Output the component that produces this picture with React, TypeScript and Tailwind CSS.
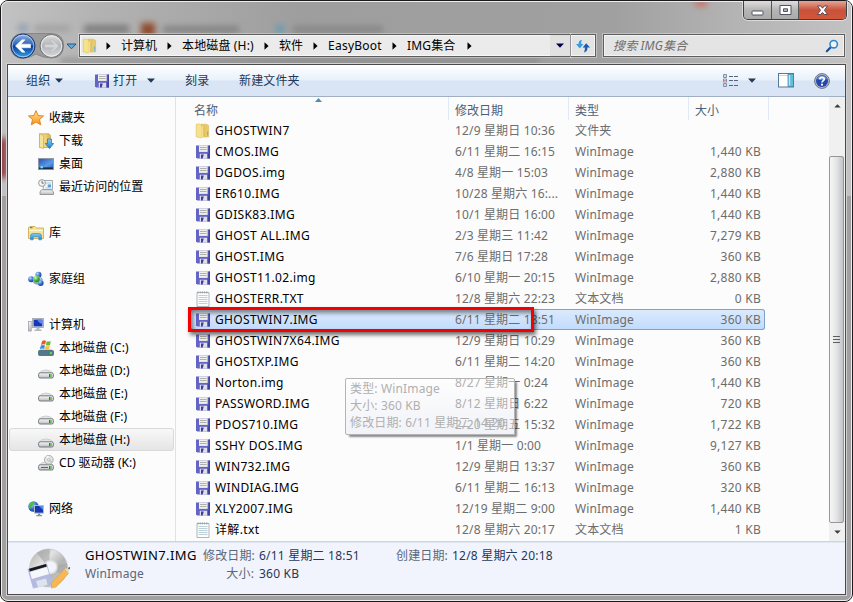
import React from 'react';
import { clsx } from 'clsx';

type IconKind = 'star' | 'download' | 'desktop' | 'recent' | 'library' | 'homegroup' | 'computer' | 'system' | 'drive' | 'cd' | 'network' | 'folder' | 'floppy' | 'text';

interface NavItem {
  icon?: IconKind;
  label?: string;
  child?: boolean;
  selected?: boolean;
}

interface FileItem {
  icon: IconKind;
  name: string;
  date: string;
  type: string;
  size: string;
}

const navItems: NavItem[] = [
  { icon: 'star', label: '收藏夹' },
  { icon: 'download', label: '下载', child: true },
  { icon: 'desktop', label: '桌面', child: true },
  { icon: 'recent', label: '最近访问的位置', child: true },
  {},
  { icon: 'library', label: '库' },
  {},
  { icon: 'homegroup', label: '家庭组' },
  {},
  { icon: 'computer', label: '计算机' },
  { icon: 'system', label: '本地磁盘 (C:)', child: true },
  { icon: 'drive', label: '本地磁盘 (D:)', child: true },
  { icon: 'drive', label: '本地磁盘 (E:)', child: true },
  { icon: 'drive', label: '本地磁盘 (F:)', child: true },
  { icon: 'drive', label: '本地磁盘 (H:)', child: true, selected: true },
  { icon: 'cd', label: 'CD 驱动器 (K:)', child: true },
  {},
  { icon: 'network', label: '网络' },
];

const img = (name: string, date: string, size: string): FileItem => ({ icon: 'floppy', name, date, type: 'WinImage', size });

const files: FileItem[] = [
  { icon: 'folder', name: 'GHOSTWIN7', date: '12/9 星期日 10:36', type: '文件夹', size: '' },
  img('CMOS.IMG', '6/11 星期二 16:15', '1,440 KB'),
  img('DGDOS.img', '4/8 星期一 15:03', '2,880 KB'),
  img('ER610.IMG', '10/28 星期六 16:...', '1,440 KB'),
  img('GDISK83.IMG', '10/1 星期日 16:00', '1,440 KB'),
  img('GHOST ALL.IMG', '2/3 星期三 11:42', '7,279 KB'),
  img('GHOST.IMG', '7/6 星期日 17:28', '360 KB'),
  img('GHOST11.02.img', '6/10 星期一 20:15', '2,880 KB'),
  { icon: 'text', name: 'GHOSTERR.TXT', date: '12/8 星期六 22:23', type: '文本文档', size: '0 KB' },
  img('GHOSTWIN7.IMG', '6/11 星期二 18:51', '360 KB'),
  img('GHOSTWIN7X64.IMG', '12/9 星期日 10:29', '360 KB'),
  img('GHOSTXP.IMG', '6/11 星期二 14:20', '360 KB'),
  img('Norton.img', '8/27 星期一 0:24', '1,440 KB'),
  img('PASSWORD.IMG', '8/12 星期日 6:22', '720 KB'),
  img('PDOS710.IMG', '2/20 星期五 15:32', '1,722 KB'),
  img('SSHY DOS.IMG', '1/1 星期一 0:00', '9,127 KB'),
  img('WIN732.IMG', '12/9 星期日 13:37', '360 KB'),
  img('WINDIAG.IMG', '6/11 星期二 16:13', '320 KB'),
  img('XLY2007.IMG', '12/19 星期二 9:00', '1,440 KB'),
  { icon: 'text', name: '详解.txt', date: '12/8 星期六 20:17', type: '文本文档', size: '1 KB' },
];

const selectedFile = 'GHOSTWIN7.IMG';

const Defs = () => (
  <svg width="0" height="0" className="absolute">
    <defs>
      <linearGradient id="gold" x1="0" x2="1">
        <stop offset="0" stopColor="#fdf3b0" />
        <stop offset="1" stopColor="#dcb24c" />
      </linearGradient>
      <linearGradient id="starFill" x1="0" y1="0" x2="0" y2="1">
        <stop offset="0" stopColor="#ffe68a" />
        <stop offset="1" stopColor="#f8931d" />
      </linearGradient>
      <linearGradient id="screen" x1="0" y1="0" x2="1" y2="1">
        <stop offset="0" stopColor="#2a50b4" />
        <stop offset="0.6" stopColor="#5a9be6" />
        <stop offset="1" stopColor="#2454b8" />
      </linearGradient>
      <linearGradient id="metal" x1="0" y1="0" x2="0" y2="1">
        <stop offset="0" stopColor="#fafafa" />
        <stop offset="1" stopColor="#b8bcc0" />
      </linearGradient>
      <linearGradient id="sky" x1="0" y1="0" x2="0" y2="1">
        <stop offset="0" stopColor="#7fd0f5" />
        <stop offset="1" stopColor="#1f7fc8" />
      </linearGradient>
      <radialGradient id="ballBlue" cx="0.35" cy="0.3" r="0.8">
        <stop offset="0" stopColor="#b8dcff" />
        <stop offset="0.5" stopColor="#3a74d0" />
        <stop offset="1" stopColor="#15307e" />
      </radialGradient>
      <radialGradient id="ballGreen" cx="0.35" cy="0.3" r="0.8">
        <stop offset="0" stopColor="#d4f7b4" />
        <stop offset="0.5" stopColor="#3fae3a" />
        <stop offset="1" stopColor="#146a1c" />
      </radialGradient>
      <linearGradient id="backBtn" x1="0" y1="0" x2="0" y2="1">
        <stop offset="0" stopColor="#8fb4e4" />
        <stop offset="0.45" stopColor="#2b62b8" />
        <stop offset="0.5" stopColor="#0c3a98" />
        <stop offset="1" stopColor="#2fa6ee" />
      </linearGradient>
      <linearGradient id="fwdBtn" x1="0" y1="0" x2="0" y2="1">
        <stop offset="0" stopColor="#dadcdd" />
        <stop offset="0.5" stopColor="#b2b5b7" />
        <stop offset="1" stopColor="#d9dcde" />
      </linearGradient>
      <linearGradient id="disc" x1="0" y1="0" x2="1" y2="1">
        <stop offset="0" stopColor="#a9a9a9" />
        <stop offset="0.35" stopColor="#e2e2e2" />
        <stop offset="0.6" stopColor="#b4b4b4" />
        <stop offset="1" stopColor="#d6d6d6" />
      </linearGradient>
    </defs>
  </svg>
);

const DriveBody = () => (
  <>
    <path d="M3.5 8 Q8 5.8 12.5 8 L15 10.4 H1 Z" fill="#e4e5e6" stroke="#b9bbbd" strokeWidth="0.6" />
    <rect x="0.6" y="9.8" width="14.8" height="5.2" rx="1.6" fill="url(#metal)" stroke="#75787b" />
    <rect x="11" y="11" width="1.6" height="3" fill="#2a8a26" />
    <rect x="12.6" y="11" width="1.4" height="3" fill="#6fd84c" />
  </>
);

const Icon = ({ kind }: { kind: IconKind }) => (
  <svg width="16" height="16" viewBox="0 0 16 16" className="shrink-0">
    {kind === 'star' && (
      <path d="M8 0.6 L10.1 5.5 L15.5 6 L11.5 9.5 L12.7 14.8 L8 12 L3.3 14.8 L4.5 9.5 L0.5 6 L5.9 5.5 Z" fill="url(#starFill)" stroke="#dc7b1c" strokeWidth="0.9" />
    )}
    {kind === 'download' && (
      <>
        <path d="M1.5 0.8 H11 L12.5 2.4 V14.5 H1.5 Z" fill="url(#gold)" stroke="#cda546" strokeWidth="0.8" />
        <path d="M1.5 0.8 L5.5 2.5 V15.5 L1.5 14.3 Z" fill="#f6e39a" stroke="#d0aa4c" strokeWidth="0.7" />
        <path d="M9.5 6 H13.5 V10.5 H15.7 L11.5 15.6 L7.3 10.5 H9.5 Z" fill="url(#sky)" stroke="#1c6fb4" strokeWidth="0.7" />
      </>
    )}
    {kind === 'desktop' && (
      <>
        <rect x="0.5" y="2.5" width="15" height="11" fill="url(#screen)" stroke="#8f9aa8" />
        <rect x="1" y="11.4" width="14" height="1.7" fill="#1b2c48" />
        <circle cx="3.6" cy="11" r="1.5" fill="#55c6ee" />
        <rect x="3.4" y="10.8" width="1.2" height="1.2" fill="#f6e04a" />
      </>
    )}
    {kind === 'recent' && (
      <>
        <path d="M6 1.5 H14.5 V10.5 H5 Z" fill="#eef3f7" stroke="#9aa0a5" strokeWidth="0.9" />
        <path d="M7.5 4 H13 M7.5 9 H13" stroke="#a9cfe6" />
        <path d="M9.8 5.4 H13 V8.2 H9.8 Z" fill="#5a9fd8" />
        <path d="M3.5 10.8 H13.5 L15.5 13 V15.5 H2 V13 Z" fill="url(#metal)" stroke="#85898c" strokeWidth="0.8" />
        <circle cx="4" cy="4" r="3.4" fill="#f2f4f5" stroke="#8e9396" strokeWidth="0.9" />
        <path d="M4 1.8 V4.2 H5.8" fill="none" stroke="#55595c" strokeWidth="0.8" />
      </>
    )}
    {kind === 'library' && (
      <>
        <path d="M0.5 2.5 L2 1.5 H7 L8.5 3 H15.5 V13.5 H0.5 Z" fill="#f5e39a" stroke="#c9a54b" strokeWidth="0.8" />
        <path d="M2 2.6 H4.5" stroke="#3aa63a" strokeWidth="1.2" />
        <path d="M1 5.5 H15" stroke="#fff6cd" />
        <path d="M2.5 14.8 V11 Q2.5 8.5 5 8.5 H11 Q13.5 8.5 13.5 11 V14.8 H10.8 V11.8 H5.2 V14.8 Z" fill="url(#sky)" stroke="#3d8fc4" strokeWidth="0.7" />
      </>
    )}
    {kind === 'homegroup' && (
      <>
        <circle cx="10.5" cy="3.8" r="3" fill="url(#ballBlue)" />
        <circle cx="3.2" cy="8.3" r="3" fill="url(#ballBlue)" />
        <circle cx="12.6" cy="12" r="3" fill="url(#ballBlue)" />
        <path d="M4.5 11 Q7 14.5 10.5 13.5 L10 11 Z M12 6 Q15.8 7 14.5 10.5 L12.5 9.5 Z" fill="#84aade" />
        <circle cx="8.6" cy="8.2" r="3.5" fill="url(#ballGreen)" stroke="#e7f7e6" strokeWidth="0.4" />
      </>
    )}
    {kind === 'computer' && (
      <>
        <rect x="0.6" y="4.5" width="2.6" height="9.5" fill="url(#metal)" stroke="#94999e" strokeWidth="0.7" />
        <rect x="4.5" y="1.5" width="11" height="9" fill="#d6dbe0" stroke="#9aa1a8" strokeWidth="0.8" />
        <rect x="5.6" y="2.6" width="8.8" height="6.8" fill="#1638b4" />
        <path d="M9 2.6 H14.4 V7 Q11 6.5 9 2.6 Z" fill="#5a86ee" />
        <path d="M8.5 11 H11.5 V12.5 H13.5 V14 H6.5 V12.5 H8.5 Z" fill="#b4b9be" />
      </>
    )}
    {kind === 'system' && (
      <>
        <path d="M2.5 9 H13.5 L15.5 11 H0.5 Z" fill="#c9d6dc" />
        <rect x="0.5" y="10.5" width="15" height="5" rx="1" fill="#52798e" stroke="#425c69" strokeWidth="0.7" />
        <rect x="12" y="12" width="2" height="2.2" fill="#58dc44" />
        <path d="M4 1.2 Q6 -0.3 8 0.9 L7.2 4.6 Q5.2 3.6 3 4.9 Z" fill="#e85a2a" />
        <path d="M8.7 1.2 Q10.7 2.1 12.8 1 L12 4.9 Q10 6 7.9 4.9 Z" fill="#6ab93a" />
        <path d="M2.8 5.6 Q5 4.5 7 5.5 L6.2 9 Q4.2 8 1.9 9.2 Z" fill="#3a8ee0" />
        <path d="M7.7 5.8 Q9.8 6.7 11.8 5.6 L11 9.2 Q9 10.3 6.9 9.2 Z" fill="#f8c53a" />
      </>
    )}
    {kind === 'drive' && <DriveBody />}
    {kind === 'cd' && (
      <>
        <DriveBody />
        <circle cx="10.8" cy="4.8" r="4.4" fill="#e4e4e6" stroke="#939598" strokeWidth="0.7" />
        <path d="M10.8 4.8 L8 1.5 L10.5 0.8 Z" fill="#f7f7f7" />
        <path d="M10.8 4.8 L14.5 6.5 L13 8.3 Z" fill="#b9cbbd" />
        <circle cx="10.8" cy="4.8" r="1.2" fill="#fff" stroke="#8c8e90" strokeWidth="0.6" />
        <path d="M3 12.4 H10" stroke="#55585a" />
      </>
    )}
    {kind === 'network' && (
      <>
        <circle cx="5.5" cy="5.5" r="5.2" fill="url(#ballBlue)" />
        <path d="M2 2 Q5 -0.4 6.5 1.5 Q6 4 4 5 Q3.5 8 1.5 7.5 Q-0.2 5 2 2 Z" fill="#4dbb48" />
        <path d="M5.5 9 Q7 7 8 7 V10 Z" fill="#6ccd5a" />
        <rect x="6.5" y="4.5" width="9" height="7.6" fill="#1837ae" stroke="#b8c2cc" strokeWidth="0.9" />
        <path d="M11 5 H15 V9 Z" fill="#5c8cf0" />
        <path d="M10 12.5 H12.2 V14 H14 V15.2 H8.3 V14 H10 Z" fill="#8692a0" />
      </>
    )}
    {kind === 'folder' && (
      <>
        <path d="M6 1.2 H11.5 L13.6 2.4 V14 H6 Z" fill="#e8ca68" stroke="#d3b052" strokeWidth="0.5" />
        <path d="M1.2 1.4 L4 0.9 L6.6 2.2 V15 L1.2 13.8 Z" fill="#f7e28c" stroke="#dcbc5e" strokeWidth="0.6" />
        <path d="M6.6 4 L9.4 2 V13.4 L6.6 15.2 Z" fill="url(#gold)" />
        <rect x="12" y="8.5" width="1.2" height="4" fill="#6cb4e4" />
      </>
    )}
    {kind === 'floppy' && (
      <>
        <path d="M1 1.5 H15 V14.5 H2.2 L1 13.3 Z" fill="#6464c6" />
        <path d="M13.6 1.5 H15 V14.5 H12.4 V9.5 H13.6 Z" fill="#43439f" />
        <rect x="4" y="1.5" width="8.6" height="6.4" fill="#f0f0ec" />
        <path d="M5 3.5 H11.6 M5 5.5 H11.6" stroke="#b0b0a8" />
        <rect x="4.8" y="9.8" width="7.4" height="4.7" fill="#dedeea" />
        <path d="M6 10.5 H8.8 L7.6 14.5 H6 Z" fill="#3e3e98" />
      </>
    )}
    {kind === 'text' && (
      <>
        <path d="M2 1.5 H14 V15.5 H2 Z" fill="#fbfdfe" stroke="#9aa4a8" strokeWidth="0.8" />
        <path d="M3.5 4.5 H12.5 M3.5 6.5 H12.5 M3.5 8.5 H12.5 M3.5 10.5 H12.5 M3.5 12.5 H12.5" stroke="#b3cbd4" strokeWidth="0.9" />
        <path d="M3 0.4 V2.4 M5.2 0.4 V2.4 M7.4 0.4 V2.4 M9.6 0.4 V2.4 M11.8 0.4 V2.4" stroke="#8f9699" strokeWidth="0.9" />
      </>
    )}
  </svg>
);

const Triangle = ({ className }: { className?: string }) => (
  <svg width="8" height="5" viewBox="0 0 8 5" className={className}>
    <path d="M0 0.5 H8 L4 4.8 Z" fill="currentColor" />
  </svg>
);

const Backdrop = () => (
  <svg width="853" height="602" className="absolute inset-0">
    <defs>
      <linearGradient id="glass" x1="0" x2="1">
        <stop offset="0" stopColor="#c2c2c2" />
        <stop offset="0.12" stopColor="#b2b2b2" />
        <stop offset="0.35" stopColor="#9e9e9e" />
        <stop offset="0.72" stopColor="#a0a0a0" />
        <stop offset="0.88" stopColor="#b6b6b6" />
        <stop offset="1" stopColor="#c2c2c2" />
      </linearGradient>
      <filter id="soft" x="-50%" y="-80%" width="200%" height="260%">
        <feGaussianBlur stdDeviation="3" />
      </filter>
    </defs>
    <rect width="853" height="602" fill="#a19fa0" />
    <rect width="853" height="196" fill="url(#glass)" />
    <g filter="url(#soft)">
      <rect x="18" y="24" width="10" height="8" fill="#93a0b2" />
      <rect x="34" y="25" width="36" height="7" fill="#a2a2a2" />
      <rect x="84" y="25" width="45" height="8" fill="#7c7c7c" />
      <rect x="141" y="23" width="14" height="13" fill="#8f4a2a" />
      <rect x="163" y="26" width="76" height="7" fill="#828282" />
      <circle cx="280" cy="29" r="5" fill="#6d9cae" />
      <rect x="293" y="26" width="90" height="7" fill="#868686" />
      <rect x="60" y="59" width="480" height="4" fill="#888" />
      <ellipse cx="701" cy="3" rx="7" ry="4" fill="#c4756a" />
      <rect x="-4" y="138" width="12" height="40" fill="#96454b" />
    </g>
  </svg>
);

const TitleBar = () => (
  <div className="flex h-[33px] justify-end pr-[5px]">
    <div className="flex h-[19px] overflow-hidden rounded-b-[5px] border border-t-0 border-[#3f3f3f] text-white shadow-[0_0_0_1px_rgba(255,255,255,0.5)]">
      <button className="flex w-[28px] items-center justify-center border-r border-[#555] bg-linear-to-b from-[#dedede] via-[#b5b5b5] via-50% to-[#aaaaaa]">
        <svg width="13" height="13"><rect x="1" y="7" width="11" height="4" rx="0.8" fill="#fff" stroke="#51535f" /></svg>
      </button>
      <button className="flex w-[27px] items-center justify-center border-r border-[#555] bg-linear-to-b from-[#dedede] via-[#b5b5b5] via-50% to-[#aaaaaa]">
        <svg width="13" height="13">
          <path d="M1 1.5 H12 V10.5 H1 Z M4.5 4.8 V7.5 H8.5 V4.8 Z" fill="#fff" stroke="#51535f" fillRule="evenodd" />
        </svg>
      </button>
      <button className="flex w-[47px] items-center justify-center bg-linear-to-b from-[#e3a596] via-[#c8523a] via-50% to-[#d2563a]">
        <svg width="13" height="13">
          <path d="M1.5 2 H4.8 L6.5 4.2 L8.2 2 H11.5 L8.4 6.3 L11.7 10.5 H8.3 L6.5 8.4 L4.7 10.5 H1.3 L4.6 6.3 Z" fill="#fff" stroke="#54404a" strokeWidth="0.9" />
        </svg>
      </button>
    </div>
  </div>
);

const Arrow = () => (
  <span className="flex w-[25px] shrink-0 justify-center">
    <svg width="5" height="8"><path d="M0.5 0.3 L4.6 4 L0.5 7.7 Z" fill="#000" /></svg>
  </span>
);

const AddressBar = () => (
  <div className="flex h-[31px] items-start pl-[8px] pr-[7px]">
    <svg width="70" height="28" viewBox="0 0 70 28" className="-mt-[2px] shrink-0">
      <path d="M12 1.5 H42 Q55 2 54.5 14 Q54 26 42 26 Q33 25.5 27 22 Q21 26 14 26.5 Q2 26 1.5 14 Q2 3 12 1.5 Z" fill="#9b9b9b" stroke="#7d7d7d" strokeWidth="0.8" />
      <circle cx="14" cy="14" r="12" fill="url(#backBtn)" stroke="#22386c" />
      <circle cx="14" cy="14" r="10.8" fill="none" stroke="#cfe2f6" strokeOpacity="0.7" />
      <path d="M6.5 14 L13 7.8 H16 L12 12.2 H21.5 V15.8 H12 L16 20.2 H13 Z" fill="#fff" stroke="#fff" strokeWidth="0.6" />
      <circle cx="42.5" cy="14" r="11.5" fill="url(#fwdBtn)" stroke="#6d6f71" />
      <circle cx="42.5" cy="14" r="10.2" fill="none" stroke="#f4f4f4" strokeOpacity="0.8" />
      <path d="M50 14 L43.5 7.8 H40.5 L44.5 12.2 H35.5 V15.8 H44.5 L40.5 20.2 H43.5 Z" fill="#d2d4d5" stroke="#b4b6b8" strokeWidth="0.6" />
      <path d="M58 12 H67 L62.5 16.8 Z" fill="#59aee2" stroke="#244c74" strokeWidth="0.9" />
    </svg>
    <div className="flex h-[23px] w-[492px] items-center border border-[#5e5e5e] bg-[#ebebeb] shadow-[inset_0_0_0_1px_#f8f8f8,0_0_0_1px_rgba(255,255,255,0.35)]">
      <span className="ml-[2px] flex w-[14px]"><Icon kind="folder" /></span>
      <Arrow />
      <span className="w-[36px] tracking-normal">计算机</span>
      <Arrow />
      <span className="w-[72px]">本地磁盘 (H:)</span>
      <Arrow />
      <span className="w-[24px] tracking-normal">软件</span>
      <Arrow />
      <span className="w-[54px] tracking-[0.25px]">EasyBoot</span>
      <Arrow />
      <span className="w-[50px]">IMG集合</span>
      <Arrow />
      <span className="ml-auto flex h-full w-[20px] items-center justify-center bg-[#e1e1e1] text-[#00004e]"><Triangle /></span>
    </div>
    <div className="flex h-[23px] w-[25px] items-center justify-center border border-l-0 border-[#5e5e5e] bg-[#e4e4e4] shadow-[inset_0_0_0_1px_#f4f4f4,0_0_0_1px_rgba(255,255,255,0.35)]">
      <svg width="16" height="14" viewBox="0 0 16 14">
        <path d="M7 1 Q3.5 1.2 3.6 5 H1 L4.8 9.4 L8.4 5 H6.2 Q6 2.5 7 1 Z" fill="#3c9ade" />
        <path d="M9 13.4 Q12.6 13 12.4 8.6 H15 L11.2 4.2 L7.6 8.6 H9.9 Q10.1 11.6 9 13.4 Z" fill="#1b5cac" />
      </svg>
    </div>
    <div className="ml-auto flex h-[23px] w-[242px] items-center justify-between border border-[#5e5e5e] bg-[#e4e4e4] pl-[9px] pr-[5px] text-[#6c6c6c] italic shadow-[inset_0_0_0_1px_#f4f4f4,0_0_0_1px_rgba(255,255,255,0.35)]">
      <span>搜索 IMG集合</span>
      <svg width="14" height="14" viewBox="0 0 14 14">
        <path d="M1.8 12.2 L6 8" stroke="#204e9a" strokeWidth="2.2" strokeLinecap="round" />
        <circle cx="8.7" cy="5.2" r="3.7" fill="#edf5fa" stroke="#3287cc" strokeWidth="1.6" />
      </svg>
    </div>
  </div>
);

const Toolbar = () => (
  <div className="flex h-[32px] shrink-0 items-center border-b border-[#a0afc3] bg-linear-to-b from-[#ffffff] from-0% via-[#e8f1fb] via-48% to-[#d9e5f4] to-52% pl-[18px] pr-[15px] text-[#1e395b]">
    <span className="w-[29px]">组织</span>
    <Triangle />
    <span className="ml-[31px] flex w-[18px]"><Icon kind="floppy" /></span>
    <span className="ml-px w-[34px]">打开</span>
    <Triangle />
    <span className="ml-[30px] w-[54px]">刻录</span>
    <span>新建文件夹</span>
    <div className="ml-auto flex items-center">
      <svg width="17" height="14" viewBox="0 0 17 14">
        <path d="M0.5 0.5 H3.5 V3.5 H0.5 Z M0.5 5 H3.5 V8 H0.5 Z M0.5 9.5 H3.5 V12.5 H0.5 Z" fill="#fff" stroke="#8592a6" />
        <path d="M1.4 2 H2.6 M1.4 11 H2.6" stroke="#4577bd" />
        <path d="M1.4 6.5 H2.6" stroke="#d23c32" />
        <path d="M6 2.5 H10 M11 2.5 H15 M6 6.5 H10 M11 6.5 H15 M6 11.5 H10 M11 11.5 H15" stroke="#56657b" />
      </svg>
      <Triangle className="ml-[8px]" />
      <svg width="17" height="15" viewBox="0 0 17 15" className="ml-[22px]">
        <rect x="0.5" y="0.5" width="15" height="13.5" fill="#fff" stroke="#56789a" />
        <path d="M1 2.5 H15.5" stroke="#c8d6e3" />
        <rect x="10" y="1" width="5.5" height="12.5" fill="#62bcd9" stroke="#3d7b9e" strokeWidth="0.7" />
        <path d="M11.5 2 V12.5" stroke="#b8e6f2" strokeWidth="1.4" />
      </svg>
      <svg width="16" height="16" viewBox="0 0 16 16" className="ml-[19px]">
        <circle cx="8" cy="8" r="7.4" fill="#b9bdc7" stroke="#6d7280" />
        <circle cx="8" cy="8" r="6" fill="#2247ad" />
        <path d="M3 6 A5.3 5.3 0 0 1 13 6 Q8 8 3 6 Z" fill="#6b8ddc" />
        <path d="M5.9 6.3 Q5.9 4.3 8 4.3 Q10.2 4.3 10.2 6.2 Q10.2 7.2 8.9 7.9 Q8 8.4 8 9.5" fill="none" stroke="#fff" strokeWidth="1.7" />
        <circle cx="8" cy="11.7" r="1.1" fill="#fff" />
      </svg>
    </div>
  </div>
);

const Sidebar = () => (
  <div className="w-[168px] shrink-0 border-r border-[#d6e5f5] pt-[9px] pl-px tracking-[0.05px]">
    {navItems.map((item, i) => (
      <div
        key={i}
        className={clsx(
          'flex h-[23px] w-[165px] items-center rounded-[3px] border text-black',
          item.child ? 'pl-[28px]' : 'pl-[18px]',
          item.selected ? 'border-[#d9d9d9] bg-linear-to-b from-[#f8f8f8] to-[#e5e5e5]' : 'border-transparent'
        )}
      >
        {item.icon && <Icon kind={item.icon} />}
        <span className="ml-[5px] pt-px">{item.label}</span>
      </div>
    ))}
  </div>
);

const FileList = () => (
  <div className="relative flex-1">
    <svg width="7" height="4" className="absolute left-[139px] top-[1px]"><path d="M0 4 L3.5 0 L7 4 Z" fill="#4f8fae" /></svg>
    <div className="flex h-[23px] tracking-normal text-[#4c607a]">
      <div className="flex w-[273px] items-center border-r border-[#dfeaf6] pt-[4px] pl-[18px]">名称</div>
      <div className="flex w-[120px] items-center border-r border-[#dfeaf6] pt-[4px] pl-[6px]">修改日期</div>
      <div className="flex w-[120px] items-center border-r border-[#dfeaf6] pt-[4px] pl-[6px]">类型</div>
      <div className="flex w-[80px] items-center border-r border-[#dfeaf6] pt-[4px] pl-[6px]">大小</div>
    </div>
    {files.map((file) => (
      <div
        key={file.name}
        className={clsx(
          'ml-[14px] flex h-[21px] w-[575px] items-center pl-[5px] pr-[4px]',
          file.name === selectedFile && 'rounded-[3px] bg-linear-to-b from-[#dcebfc] to-[#c1dbfc] shadow-[inset_0_0_0_1px_#7da2ce]'
        )}
      >
        <Icon kind={file.icon} />
        <span className="ml-[4px] w-[240px] tracking-[0.35px] text-black">{file.name}</span>
        <span className="w-[120px] text-[#6d6d6d]">{file.date}</span>
        <span className="w-[100px] text-[#6d6d6d]">{file.type}</span>
        <span className="flex-1 text-right tracking-[0.25px] text-[#6d6d6d]">{file.size}</span>
      </div>
    ))}
  </div>
);

const ScrollBar = () => (
  <div className="flex w-[16px] shrink-0 flex-col bg-[#f0f0f0] text-[#3c3c3c]">
    <div className="flex h-[59px] w-full justify-center pt-[7px]"><Triangle className="h-[4px] w-[7px] rotate-180" /></div>
    <div className="flex h-[367px] w-[15px] flex-col items-center justify-center gap-[2px] rounded-[2px] border border-[#979797] bg-linear-to-r from-[#f6f6f6] via-[#e4e4e6] via-50% to-[#c3c4c8]">
      <i className="h-px w-[7px] bg-[#5e5e5e]" />
      <i className="h-px w-[7px] bg-[#5e5e5e]" />
      <i className="h-px w-[7px] bg-[#5e5e5e]" />
    </div>
    <div className="flex flex-1 items-center justify-center"><Triangle className="h-[4px] w-[7px]" /></div>
  </div>
);

const DetailsPane = () => (
  <div className="flex flex-1 border-t border-[#c9d6e8] bg-[#f1f4fc] shadow-[inset_0_1px_0_#dfe7f3]">
    <svg width="44" height="42" viewBox="0 0 44 42" className="ml-[19px] mt-[6px] shrink-0">
      <circle cx="21.5" cy="20" r="19" fill="url(#disc)" stroke="#c2c2c2" strokeWidth="0.6" />
      <path d="M21.5 20 L10 5 Q16 0.8 23 1.2 Z" fill="#989898" fillOpacity="0.5" />
      <path d="M21.5 20 L40 15 Q41.5 22 38.5 28 Z" fill="#a5a5a5" fillOpacity="0.6" />
      <circle cx="23.5" cy="19" r="6.5" fill="#f1f4fc" stroke="#dcdcdc" strokeWidth="1.6" />
      <path d="M0.5 21 L20 15.5 L25.5 36 L6 40.5 Z" fill="#b3bbde" />
      <path d="M2 20.8 L19 16 L19.8 18.6 L2.8 23.6 Z" fill="#191919" />
      <path d="M3 24 L20 19 L22 26 L4.8 31 Z" fill="#f6f7fb" />
      <path d="M9 33 L19 30.4 L20.6 36.8 L11 39.2 Z" fill="#dfe3f0" />
      <path d="M24.5 35 L37.5 21 L41.5 25.5 L29 39 L24.5 40 Z" fill="#f8b750" stroke="#e69d39" strokeWidth="0.6" />
      <path d="M37.5 21 L42.5 19.5 L41.5 25.5 Z" fill="#e8d6b5" />
      <path d="M41 20 L43.2 19 L42.4 21.5 Z" fill="#333" />
    </svg>
    <div className="ml-[14px] w-[118px] pt-[4px] leading-[18px]">
      <div className="text-[13px] tracking-[0.4px] text-black">GHOSTWIN7.IMG</div>
      <div className="mt-px text-[#5a6779]">WinImage</div>
    </div>
    <div className="w-[51px] pt-[5px] text-right leading-[18px] text-[#5a6779]">
      <div>修改日期:</div>
      <div>大小:</div>
    </div>
    <div className="ml-[5px] w-[137px] pt-[5px] leading-[18px] tracking-[0.2px] text-[#1e395b]">
      <div>6/11 星期二 18:51</div>
      <div>360 KB</div>
    </div>
    <div className="flex pt-[5px] leading-[18px]">
      <span className="w-[56px] text-[#5a6779]">创建日期:</span>
      <span className="tracking-[0.2px] text-[#1e395b]">12/8 星期六 20:18</span>
    </div>
  </div>
);

const App = () => {
  return (
    <div className="relative h-[602px] w-[853px] overflow-hidden bg-white font-['Noto_Sans','Noto_Sans_CJK_SC',sans-serif] text-[12px] leading-[16px] tracking-[0.15px] whitespace-nowrap">
      <Defs />
      <div className="relative flex h-full flex-col overflow-hidden rounded-[8px] border border-[#1c191e] bg-[#a19fa0]">
        <div className="absolute -inset-px"><Backdrop /></div>
        <div className="pointer-events-none absolute inset-0 rounded-[7px] border border-[#eeeeee]" />
        <div className="relative"><TitleBar /></div>
        <div className="relative"><AddressBar /></div>
        <div className="relative mx-[6px] mt-[-1px] flex h-[531px] flex-col overflow-hidden border border-[#4a4a4a] bg-[#fcfcfc] outline outline-[#d2d2d2]">
          <Toolbar />
          <div className="flex h-[444px] shrink-0">
            <Sidebar />
            <FileList />
            <ScrollBar />
          </div>
          <DetailsPane />
        </div>
      </div>

      {/* fading hover tooltip */}
      <div className="absolute left-[345px] top-[378px] h-[57px] w-[170px] rounded-[2px] border border-[#b4b4b4] bg-linear-to-b from-[rgba(255,255,255,0.45)] to-[rgba(232,234,244,0.5)] pl-[4px] pt-px leading-[17px] text-[#b0b0b0] shadow-[3px_3px_2px_-1px_rgba(0,0,0,0.45)]">
        <div>类型: WinImage</div>
        <div>大小: 360 KB</div>
        <div>修改日期: 6/11 星期二 14:20</div>
      </div>

      {/* highlight around the chosen file */}
      <div className="absolute left-[188px] top-[307px] h-[25px] w-[346px] border-[3px] border-[#f50000] shadow-[2px_3px_4px_rgba(0,0,0,0.55),inset_2px_3px_4px_rgba(0,0,0,0.45)]" />
    </div>
  );
};

export default App;
